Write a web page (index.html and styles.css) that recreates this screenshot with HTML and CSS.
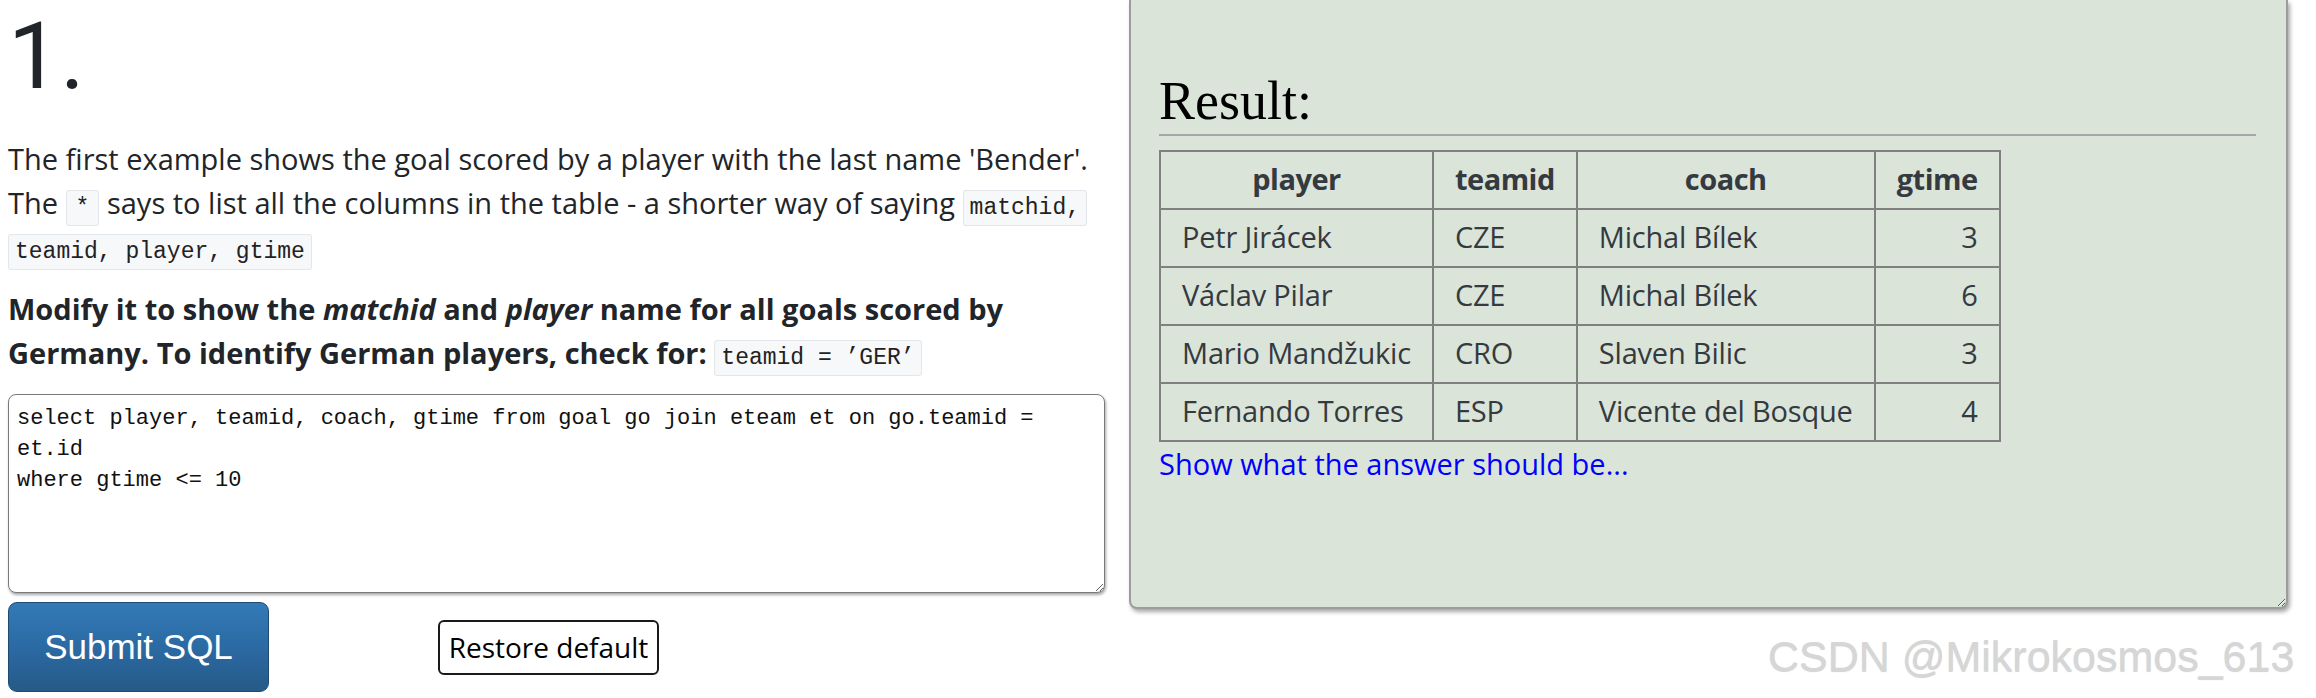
FILE: index.html
```html
<!DOCTYPE html>
<html lang="en">
<head>
<meta charset="utf-8">
<title>SQLZoo - 1.</title>
<link rel="stylesheet" href="styles.css">
</head>
<body>
<div class="page">
  <div class="question">
    <h1 class="q-number">1.</h1>
    <p class="intro">The first example shows the goal scored by a player with the last name 'Bender'.<br>The <code class="star">*</code> says to list all the columns in the table - a shorter way of saying <code>matchid,</code><br><code>teamid, player, gtime</code></p>
    <p class="task">Modify it to show the <i>matchid</i> and <i>player</i> name for all goals scored by<br>Germany. To identify German players, check for: <code>teamid = ’GER’</code></p>
    <textarea class="sql" spellcheck="false">select player, teamid, coach, gtime from goal go join eteam et on go.teamid = et.id
where gtime &lt;= 10</textarea>
    <div class="actions">
      <button class="btn-submit" type="button">Submit SQL</button>
      <button class="btn-restore" type="button">Restore default</button>
    </div>
  </div>
  <div class="result">
    <h2 class="result-title">Result:</h2>
    <table class="grid">
      <thead>
        <tr><th>player</th><th>teamid</th><th>coach</th><th>gtime</th></tr>
      </thead>
      <tbody>
        <tr><td>Petr Jirácek</td><td>CZE</td><td>Michal Bílek</td><td class="num">3</td></tr>
        <tr><td>Václav Pilar</td><td>CZE</td><td>Michal Bílek</td><td class="num">6</td></tr>
        <tr><td>Mario Mandžukic</td><td>CRO</td><td>Slaven Bilic</td><td class="num">3</td></tr>
        <tr><td>Fernando Torres</td><td>ESP</td><td>Vicente del Bosque</td><td class="num">4</td></tr>
      </tbody>
    </table>
    <a class="answer-link" href="#">Show what the answer should be...</a>
  </div>
</div>
<div class="watermark">CSDN @Mikrokosmos_613</div>
</body>
</html>
```

FILE: styles.css
```css
html, body {
  margin: 0;
  padding: 0;
  background: #ffffff;
}

body {
  font-family: "Open Sans", "Noto Sans", sans-serif;
  font-size: 29px;
  line-height: 44px;
  color: #212529;
  width: 2316px;
  height: 698px;
  overflow: hidden;
  position: relative;
}

.page {
  display: flex;
  align-items: flex-start;
  gap: 24px;
  padding-left: 8px;
}

.question {
  width: 1097px;
  flex: none;
}

.q-number {
  margin: 3px 0 26px 0;
  font-family: Roboto, "Open Sans", sans-serif;
  font-size: 93px;
  line-height: 108px;
  font-weight: 400;
  color: #212529;
}

.intro {
  margin: 0 0 18px 0;
}

.task {
  margin: 0 0 19px 0;
  font-weight: 700;
}

code {
  font-family: "Liberation Mono", "DejaVu Sans Mono", monospace;
  font-size: 23px;
  line-height: 26px;
  font-weight: 400;
  color: #222222;
  background: #f6f8fa;
  border: 1px solid #e3e6ea;
  border-radius: 3px;
  padding: 4px 6px;
}

code.star {
  padding: 4px 9px;
}

.sql {
  display: block;
  box-sizing: border-box;
  width: 1097px;
  height: 199px;
  margin: 0 0 9px 0;
  padding: 8px 8px;
  font-family: "Liberation Mono", "DejaVu Sans Mono", monospace;
  font-size: 22px;
  line-height: 31px;
  color: #111111;
  background: #ffffff;
  border: 1px solid #7a7a7a;
  border-radius: 8px;
  box-shadow: 1px 2px 3px rgba(0, 0, 0, 0.35);
  resize: both;
  outline: none;
}

.actions {
  display: flex;
  align-items: center;
}

.btn-submit {
  box-sizing: border-box;
  width: 261px;
  height: 90px;
  font-family: "Liberation Sans", Arial, sans-serif;
  font-size: 35px;
  color: #ffffff;
  background: linear-gradient(to bottom, #337ab7 0%, #2b6aa3 50%, #265a88 100%);
  border: 1px solid #1f4a72;
  border-radius: 9px;
  padding: 0;
  cursor: pointer;
}

.btn-restore {
  box-sizing: border-box;
  width: 221px;
  height: 55px;
  margin-left: 169px;
  font-family: "Open Sans", "Noto Sans", sans-serif;
  font-size: 28px;
  color: #000000;
  background: #ffffff;
  border: 2px solid #1a1a1a;
  border-radius: 6px;
  padding: 0;
  cursor: pointer;
}

.result {
  box-sizing: border-box;
  width: 1159px;
  flex: none;
  padding: 74px 30px 121px 28px;
  background: #dae4d9;
  border: 2px solid #9c9c9c;
  border-top: none;
  border-radius: 0 0 8px 8px;
  box-shadow: 2px 3px 4px rgba(0, 0, 0, 0.35);
  resize: both;
  overflow: hidden;
}

.result-title {
  margin: 0 0 14px 0;
  padding-bottom: 6px;
  font-family: "Liberation Serif", "Times New Roman", serif;
  font-size: 54px;
  line-height: 54px;
  font-weight: 400;
  color: #000000;
  border-bottom: 2px solid #a3a7ab;
}

.grid {
  border-collapse: collapse;
  color: #343a40;
}

.grid th,
.grid td {
  border: 2px solid #808080;
  padding: 5px 21px 7px;
  line-height: 44px;
  text-align: left;
}

.grid th {
  font-weight: 700;
  text-align: center;
  letter-spacing: -0.5px;
}

.grid td {
  letter-spacing: -0.2px;
}

.grid td.num {
  text-align: right;
}

.answer-link {
  display: block;
  color: #0000ff;
  text-decoration: none;
  line-height: 44px;
}

.watermark {
  position: absolute;
  left: 1768px;
  top: 631px;
  font-family: "Liberation Sans", Arial, sans-serif;
  font-size: 43px;
  line-height: 50px;
  color: #d6d6d6;
  text-shadow: 0 1px 1px rgba(0, 0, 0, 0.18);
  white-space: nowrap;
}
```
